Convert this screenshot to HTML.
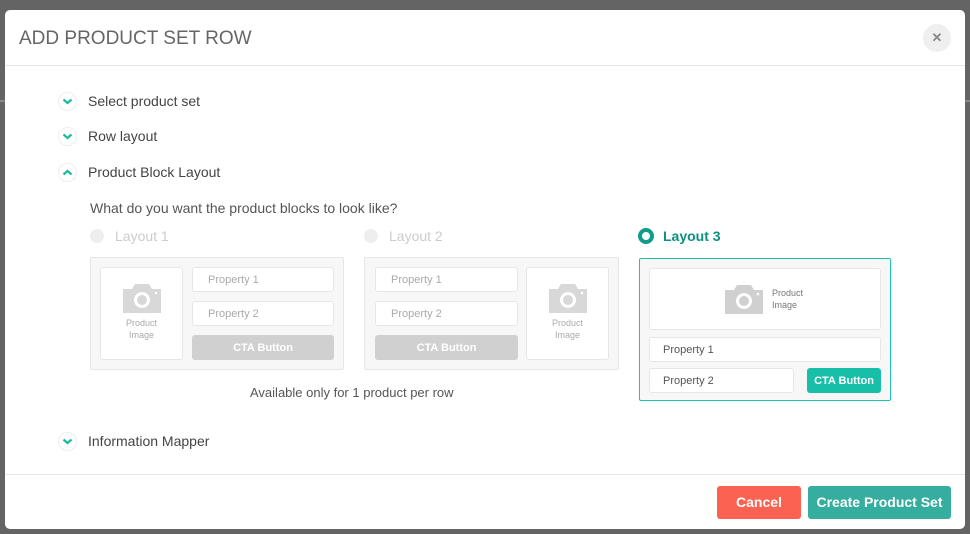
<!DOCTYPE html>
<html><head><style>
*{box-sizing:border-box;margin:0;padding:0}
body{width:970px;height:534px;background:#646464;font-family:"Liberation Sans",sans-serif;position:relative;overflow:hidden}
.bgline{position:absolute;left:965px;top:100px;width:5px;height:2px;background:#8a8a8a}
.bgline2{position:absolute;left:0;top:100px;width:5px;height:2px;background:#8a8a8a}
.modal{position:absolute;left:5px;top:10px;width:960px;height:519px;background:#fff;border-radius:5px}
.title{position:absolute;left:14px;top:18px;font-size:19px;color:#666;letter-spacing:0}
.close{position:absolute;left:918px;top:14px;width:28px;height:28px;border-radius:50%;background:#efefef;color:#888;font-size:13px;font-weight:bold;text-align:center;line-height:28px}
.hl{position:absolute;left:0;width:960px;height:1px;background:#e6e6e6}
.acc{position:absolute;left:53px;font-size:14px;color:#444}
.acc .ic{position:absolute;left:0;top:-1px;width:19px;height:19px;border-radius:50%;border:1px solid #eee;background:#fff}
.acc span{position:absolute;left:30px;top:0;white-space:nowrap}
.q{position:absolute;left:85px;top:190px;font-size:14px;color:#555}
.radio{position:absolute;width:14px;height:14px;border-radius:50%;background:#eee}
.rl{position:absolute;font-size:14px;color:#ccc}
.box{position:absolute;background:#f7f7f7;border:1px solid #e6e6e6;border-radius:2px}
.in{position:absolute;background:#fff;border:1px solid #e6e6e6;border-radius:3px;font-size:11px;color:#aaa;padding-left:15px;line-height:25px}
.img{position:absolute;background:#fff;border:1px solid #e6e6e6;border-radius:3px;font-size:9px;color:#aaa;text-align:center}
.cta{position:absolute;background:#d0d0d0;border-radius:3px;color:#fff;font-size:11px;font-weight:bold;text-align:center;line-height:26px}
.btn{position:absolute;top:476px;height:33px;border-radius:3px;color:#fff;font-weight:bold;font-size:14px;text-align:center;line-height:33px}
</style></head><body>
<div class="bgline"></div><div class="bgline2"></div>
<div class="modal">
<div class="title">ADD PRODUCT SET ROW</div>
<div class="close">✕</div>
<div class="hl" style="top:55px"></div>
<div class="acc" style="top:83px"><div class="ic"><svg width="17" height="17"><path d="M4.5 6.5l4 3.5 4-3.5" stroke="#1abc9c" stroke-width="2.2" fill="none"/></svg></div><span>Select product set</span></div>
<div class="acc" style="top:118px"><div class="ic"><svg width="17" height="17"><path d="M4.5 6.5l4 3.5 4-3.5" stroke="#1abc9c" stroke-width="2.2" fill="none"/></svg></div><span>Row layout</span></div>
<div class="acc" style="top:154px"><div class="ic"><svg width="17" height="17"><path d="M4.5 10.5l4-3.5 4 3.5" stroke="#1abc9c" stroke-width="2.2" fill="none"/></svg></div><span>Product Block Layout</span></div>
<div class="q">What do you want the product blocks to look like?</div>

<div class="radio" style="left:85px;top:219px"></div><div class="rl" style="left:110px;top:218px">Layout 1</div>
<div class="box" style="left:85px;top:247px;width:254px;height:113px">
 <div class="img" style="left:9px;top:9px;width:83px;height:93px"><svg width="42" height="34" style="margin-top:13px" viewBox="0 0 42 34"><path d="M2 8h9l3-5h14l3 5h9v24H2z" fill="#d8d8d8"/><circle cx="21" cy="19" r="8" fill="#fff"/><circle cx="21" cy="19" r="5" fill="#d8d8d8"/><circle cx="35" cy="12" r="1.3" fill="#fff"/></svg><div style="line-height:12px">Product<br>Image</div></div>
 <div class="in" style="left:101px;top:9px;width:142px;height:25px">Property 1</div>
 <div class="in" style="left:101px;top:43px;width:142px;height:25px">Property 2</div>
 <div class="cta" style="left:101px;top:77px;width:142px;height:25px">CTA Button</div>
</div>

<div class="radio" style="left:359px;top:219px"></div><div class="rl" style="left:384px;top:218px">Layout 2</div>
<div class="box" style="left:359px;top:247px;width:255px;height:113px">
 <div class="in" style="left:10px;top:9px;width:143px;height:25px">Property 1</div>
 <div class="in" style="left:10px;top:43px;width:143px;height:25px">Property 2</div>
 <div class="cta" style="left:10px;top:77px;width:143px;height:25px">CTA Button</div>
 <div class="img" style="left:161px;top:9px;width:83px;height:93px"><svg width="42" height="34" style="margin-top:13px" viewBox="0 0 42 34"><path d="M2 8h9l3-5h14l3 5h9v24H2z" fill="#d8d8d8"/><circle cx="21" cy="19" r="8" fill="#fff"/><circle cx="21" cy="19" r="5" fill="#d8d8d8"/><circle cx="35" cy="12" r="1.3" fill="#fff"/></svg><div style="line-height:12px">Product<br>Image</div></div>
</div>
<div style="position:absolute;left:245px;top:375px;font-size:13px;color:#555">Available only for 1 product per row</div>

<div class="radio" style="left:633px;top:218px;background:#fff;border:4px solid #0f9d8a;width:16px;height:16px"></div><div class="rl" style="left:658px;top:218px;color:#0f8f7e;font-weight:bold">Layout 3</div>
<div class="box" style="left:634px;top:248px;width:252px;height:143px;border-color:#1cc4b0">
 <div class="img" style="left:9px;top:9px;width:232px;height:62px"><svg width="42" height="34" style="position:absolute;left:73px;top:13px" viewBox="0 0 42 34"><path d="M2 8h9l3-5h14l3 5h9v24H2z" fill="#d0d0d0"/><circle cx="21" cy="19" r="8" fill="#fff"/><circle cx="21" cy="19" r="5" fill="#d0d0d0"/><circle cx="35" cy="12" r="1.3" fill="#fff"/></svg><div style="position:absolute;left:122px;top:18px;text-align:left;line-height:12px;color:#777">Product<br>Image</div></div>
 <div class="in" style="left:9px;top:78px;width:232px;height:25px;color:#555;padding-left:13px">Property 1</div>
 <div class="in" style="left:9px;top:109px;width:145px;height:25px;color:#555;padding-left:13px">Property 2</div>
 <div class="cta" style="left:167px;top:109px;width:74px;height:25px;background:#17bfa9">CTA Button</div>
</div>

<div class="acc" style="top:423px"><div class="ic"><svg width="17" height="17"><path d="M4.5 6.5l4 3.5 4-3.5" stroke="#1abc9c" stroke-width="2.2" fill="none"/></svg></div><span>Information Mapper</span></div>

<div class="hl" style="top:464px"></div>
<div class="btn" style="left:712px;width:84px;background:#fc6251">Cancel</div>
<div class="btn" style="left:803px;width:143px;background:#35ae9f">Create Product Set</div>
</div>
</body></html>
